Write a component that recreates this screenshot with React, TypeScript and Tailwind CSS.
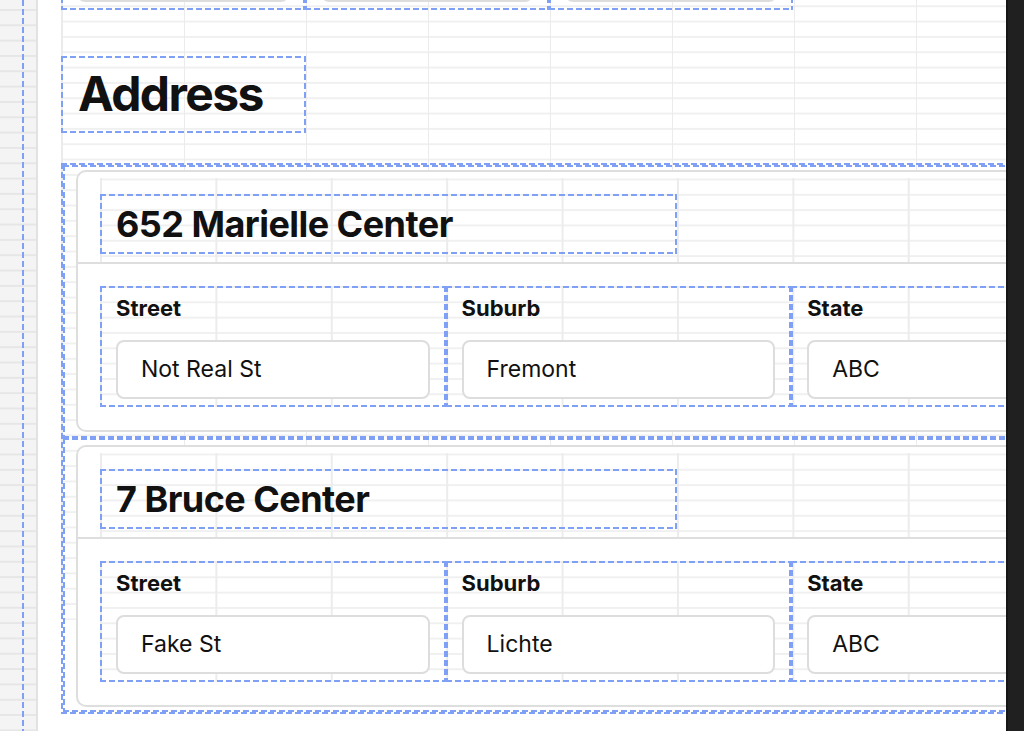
import React from 'react';

type Address = {
  title: string;
  street: string;
  suburb: string;
  state: string;
};

const addresses: Address[] = [
  { title: '652 Marielle Center', street: 'Not Real St', suburb: 'Fremont', state: 'ABC' },
  { title: '7 Bruce Center', street: 'Fake St', suburb: 'Lichte', state: 'ABC' },
];

// fields of the section above, scrolled mostly out of view
const topFields = [
  { label: 'First name', value: 'Jane' },
  { label: 'Last name', value: 'Doe' },
  { label: 'Email', value: 'jane@example.com' },
];

// layout outline: 2px dashes drawn as gradients so the dash rhythm matches the editor (6px on, 3px off)
const dashed =
  'border-2 border-transparent [background:repeating-linear-gradient(90deg,#7fa0f5_0_6px,transparent_6px_9px)_top_left/100%_2px_no-repeat_border-box,repeating-linear-gradient(90deg,#7fa0f5_0_6px,transparent_6px_9px)_bottom_left/100%_2px_no-repeat_border-box,repeating-linear-gradient(180deg,#7fa0f5_0_6px,transparent_6px_9px)_top_left/2px_100%_no-repeat_border-box,repeating-linear-gradient(180deg,#7fa0f5_0_6px,transparent_6px_9px)_top_right/2px_100%_no-repeat_border-box]';

const cardGrid =
  '[background-image:linear-gradient(to_right,#ececec_2px,transparent_2px),linear-gradient(to_bottom,#f0f0f0_2px,transparent_2px)] [background-size:115.4px_15.333px]';

const Field: React.FC<{ label: string; value: string; width: string }> = ({ label, value, width }) => (
  <div className={`${dashed} ${width} shrink-0 px-[14px] pt-[6px] pb-[6px]`}>
    <div className="text-[22px] leading-[28px] font-bold text-[#111]">{label}</div>
    <div className="mt-[18px] flex h-[59px] items-center rounded-[8px] border-2 border-[#dddddd] bg-white pl-[23px] text-[23px] text-[#111]">
      {value}
    </div>
  </div>
);

const AddressCard: React.FC<{ address: Address; spacing: string }> = ({ address, spacing }) => (
  <div className={`${dashed} pl-[11px] ${spacing}`}>
    <div className="overflow-hidden rounded-[10px] border-2 border-[#dedede] bg-white">
      {/* Header */}
      <div className="pl-[22px] pt-[6px]">
        <div className={`${cardGrid} [background-position:0_0.5px] pt-[16px] pb-[8px]`}>
          <div className={`${dashed} w-[577px] px-[14px] pt-[8px] pb-[8px]`}>
            <h3 className="text-[36px] leading-[40px] font-bold tracking-[-0.015em] text-[#111]">{address.title}</h3>
          </div>
        </div>
      </div>

      {/* Fields */}
      <div className="border-t-2 border-[#dedede] pl-[22px] pt-[22px] pb-[23px]">
        <div className={`${cardGrid} [background-position:0_0] flex`}>
          <Field label="Street" value={address.street} width="w-[345.6px]" />
          <Field label="Suburb" value={address.suburb} width="w-[345.6px]" />
          <Field label="State" value={address.state} width="w-[345.6px]" />
        </div>
      </div>
    </div>
  </div>
);

export default function App() {
  return (
    <div className="flex h-[731px] w-[1024px] overflow-hidden bg-white font-['Inter',sans-serif] text-[#111]">
      {/* Left ruler */}
      <div className="flex w-[38px] shrink-0 border-r-2 border-[#e2e2e2] bg-[#f4f4f4] [background-image:linear-gradient(to_bottom,#e6e6e6_2px,transparent_2px)] [background-size:100%_15.333px] [background-position:0_9px]">
        <div className="w-[22px]" />
        <div className="h-full w-[2px] [background-image:repeating-linear-gradient(180deg,#7fa0f5_0_6px,transparent_6px_9px)]" />
      </div>

      {/* Canvas */}
      <div className="min-w-0 flex-1 overflow-hidden pl-[23px]">
        <div className="h-full [background-image:linear-gradient(to_right,#ebebeb_2px,transparent_2px),linear-gradient(to_bottom,#f0f0f0_2px,transparent_2px)] [background-size:122px_15.333px] [background-position:0_9px]">
          <div className="-mt-[111px] flex flex-col items-start">
            <div className="flex">
              {topFields.map(f => (
                <Field key={f.label} label={f.label} value={f.value} width="w-[244px]" />
              ))}
            </div>

            <div className={`${dashed} mt-[46px] w-[245px] px-[15px] pt-[12px] pb-[13px]`}>
              <h2 className="text-[48px] leading-[48px] font-bold tracking-[-0.033em] text-[#111]">Address</h2>
            </div>

            <div className={`${dashed} mt-[30px] w-[1160px] shrink-0`}>
              {addresses.map((a, i) => (
                <AddressCard key={a.title} address={a} spacing={i === 0 ? 'pt-[3px] pb-[4px]' : 'pt-[5px] pb-[3px]'} />
              ))}
            </div>
          </div>
        </div>
      </div>

      {/* Right panel edge */}
      <div className="w-[18px] shrink-0 border-l-2 border-[#161616] bg-[#202020]" />
    </div>
  );
}
